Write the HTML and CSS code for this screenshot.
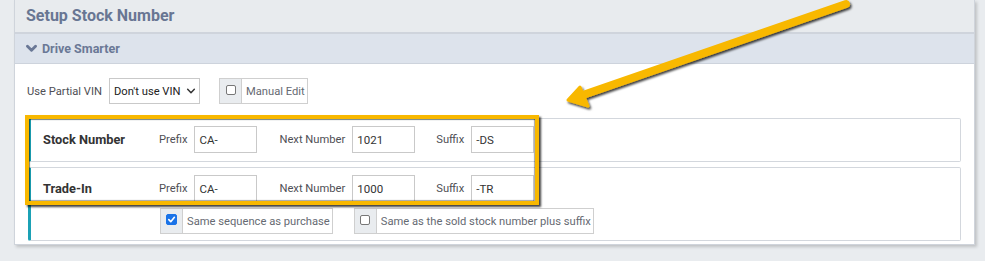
FILE: index.html
```html
<!DOCTYPE html>
<html>
<head>
<meta charset="utf-8">
<link rel="stylesheet" href="styles.css">
</head>
<body>
<div class="page">
  <div class="panel">
    <div class="title">Setup Stock Number</div>
    <div class="subhead">
      <svg class="chev" viewBox="0 0 12 12" width="11" height="11"><path d="M1.6 3.6 L6 8 L10.4 3.6" fill="none" stroke="#6a7896" stroke-width="3.1" stroke-linecap="round" stroke-linejoin="round"/></svg>
      <span>Drive Smarter</span>
    </div>
    <div class="body">
      <div class="vin-row">
        <span class="lbl">Use Partial VIN</span>
        <div class="select"><span>Don't use VIN</span>
          <svg viewBox="0 0 12 12" width="10" height="10"><path d="M2 4 L6 8 L10 4" fill="none" stroke="#333" stroke-width="1.8" stroke-linecap="round" stroke-linejoin="round"/></svg>
        </div>
        <div class="chk-group">
          <span class="addon"><span class="box"></span></span>
          <span class="chk-text">Manual Edit</span>
        </div>
      </div>
      <div class="section sec1">
        <div class="num-row">
          <span class="name">Stock Number</span>
          <span class="lbl pfx">Prefix</span><span class="input">CA-</span>
          <span class="lbl nxt">Next Number</span><span class="input">1021</span>
          <span class="lbl sfx">Suffix</span><span class="input">-DS</span>
        </div>
      </div>
      <div class="section sec2">
        <div class="num-row">
          <span class="name">Trade-In</span>
          <span class="lbl pfx">Prefix</span><span class="input">CA-</span>
          <span class="lbl nxt">Next Number</span><span class="input">1000</span>
          <span class="lbl sfx">Suffix</span><span class="input">-TR</span>
        </div>
        <div class="opt-row">
          <div class="chk-group">
            <span class="addon"><span class="box checked"><svg viewBox="0 0 10 10" width="9" height="9"><path d="M2 5.2 L4.2 7.4 L8.2 2.6" fill="none" stroke="#fff" stroke-width="1.8" stroke-linecap="round" stroke-linejoin="round"/></svg></span></span>
            <span class="chk-text">Same sequence as purchase</span>
          </div>
          <div class="chk-group">
            <span class="addon"><span class="box"></span></span>
            <span class="chk-text">Same as the sold stock number plus suffix</span>
          </div>
        </div>
      </div>
    </div>
  </div>
  <div class="highlight"></div>
  <svg class="arrow" width="985" height="261" viewBox="0 0 985 261">
    <defs>
      <filter id="sh" x="-10%" y="-10%" width="130%" height="130%">
        <feDropShadow dx="1.5" dy="2" stdDeviation="1.2" flood-color="#000" flood-opacity="0.75"/>
      </filter>
    </defs>
    <g filter="url(#sh)" fill="#f8b800" stroke="#f8b800" stroke-linejoin="round" stroke-linecap="round">
      <line x1="846" y1="4" x2="580" y2="96" stroke-width="8"/>
      <polygon points="568,100 580,87 588,106" stroke-width="3"/>
    </g>
  </svg>
</div>
</body>
</html>
```

FILE: styles.css
```css
html, body {
  margin: 0;
  padding: 0;
}
body {
  background: #e9ecef;
  font-family: Roboto, "Liberation Sans", sans-serif;
  color: #444;
}
.page {
  position: relative;
  width: 985px;
  height: 261px;
  padding: 0 11px 0 14px;
  box-sizing: border-box;
}
.panel {
  background: #fff;
  border: 1px solid #cfd4db;
  border-top: none;
  box-shadow: 2px 2px 3px rgba(0,0,0,0.18);
  width: 959px;
}
.title {
  height: 32px;
  background: #e8ebee;
  border-bottom: 2px solid #cfd4dc;
  font-size: 16px;
  font-weight: 700;
  color: #687693;
  padding-left: 11px;
  line-height: 32px;
}
.subhead {
  height: 29px;
  background: #dde3ec;
  border-bottom: 1px solid #cdd3dc;
  display: flex;
  align-items: center;
  padding-left: 11px;
  gap: 5px;
  font-size: 12.5px;
  font-weight: 700;
  color: #6a7896;
}
.body {
  padding: 14px 13px 3px 12px;
}
.vin-row {
  display: flex;
  align-items: center;
  height: 26px;
}
.lbl {
  font-size: 11.2px;
  color: #4f4f55;
  white-space: nowrap;
}
.select {
  margin-left: 7px;
  width: 91px;
  height: 26px;
  box-sizing: border-box;
  border: 1px solid #c9c9c9;
  font-size: 11.2px;
  color: #222;
  display: flex;
  align-items: center;
  padding-left: 4px;
  gap: 5px;
  white-space: nowrap;
}
.vin-row .chk-group {
  margin-left: 19px;
}
.chk-group {
  display: flex;
  height: 26px;
  border: 1px solid #cfcfcf;
  box-sizing: border-box;
}
.addon {
  width: 22px;
  background: #e9ecef;
  border-right: 1px solid #cfcfcf;
  display: flex;
  align-items: center;
  justify-content: center;
  padding-bottom: 3px;
  box-sizing: border-box;
}
.box {
  width: 10px;
  height: 10px;
  border: 1px solid #777;
  border-radius: 2px;
  background: #fff;
  box-sizing: border-box;
  display: flex;
  align-items: center;
  justify-content: center;
}
.box.checked {
  width: 11px;
  height: 11px;
  background: #1a73e8;
  border-color: #1a73e8;
}
.chk-text {
  font-size: 11.2px;
  color: #666a72;
  display: flex;
  align-items: center;
  padding: 0 2px 0 4px;
  white-space: nowrap;
}
.section {
  margin-left: 1px;
  border: 1px solid #d3d7dd;
  border-left: 3px solid #1ba1b5;
  border-radius: 2px;
  padding: 7px 0 0 12px;
}
.sec1 {
  margin-top: 14px;
  height: 44px;
  box-sizing: border-box;
}
.sec2 {
  margin-top: 5px;
  height: 74px;
  box-sizing: border-box;
}
.num-row {
  display: flex;
  align-items: center;
  height: 27px;
}
.name {
  width: 116px;
  font-size: 12.8px;
  font-weight: 700;
  color: #333;
}
.input {
  width: 63px;
  height: 27px;
  box-sizing: border-box;
  border: 1px solid #c9c9c9;
  font-size: 11.5px;
  color: #333;
  display: flex;
  align-items: center;
  padding-left: 4px;
}
.pfx { margin-right: 7px; }
.nxt { margin-left: 22px; margin-right: 7px; }
.sfx { margin-left: 21px; margin-right: 7px; }
.opt-row {
  display: flex;
  margin-top: 6px;
  padding-left: 117px;
  gap: 21px;
}
.highlight {
  position: absolute;
  left: 25px;
  top: 115px;
  width: 514px;
  height: 90px;
  box-sizing: border-box;
  border: 4px solid #f8b800;
  box-shadow: 2px 2px 2px rgba(0,0,0,0.75), inset 1px 1px 1px rgba(0,30,30,0.55), inset -1px -1px 1px rgba(0,0,0,0.35);
  pointer-events: none;
}
.arrow {
  position: absolute;
  left: 0;
  top: 0;
  pointer-events: none;
}
```
